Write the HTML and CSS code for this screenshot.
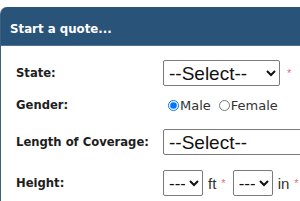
FILE: index.html
```html
<!DOCTYPE html>
<html>
<head>
<meta charset="utf-8">
<link rel="stylesheet" href="styles.css">
</head>
<body>
<div class="panel">
  <div class="panel-head">Start a quote...</div>
  <div class="panel-body">
    <div class="row row-state">
      <div class="label">State:</div>
      <div class="field">
        <select class="sel sel-state"><option>--Select--</option></select>
        <span class="req">*</span>
      </div>
    </div>
    <div class="row row-gender">
      <div class="label">Gender:</div>
      <div class="field radios">
        <label class="radio"><input type="radio" name="g" checked>Male</label>
        <label class="radio"><input type="radio" name="g">Female</label>
      </div>
    </div>
    <div class="row row-length">
      <div class="label">Length of Coverage:</div>
      <div class="field">
        <select class="sel sel-length"><option>--Select--</option></select>
      </div>
    </div>
    <div class="row row-height">
      <div class="label">Height:</div>
      <div class="field">
        <select class="sel sel-small"><option>---</option></select>
        <span class="unit">ft</span><span class="req">*</span>
        <select class="sel sel-small"><option>---</option></select>
        <span class="unit">in</span><span class="req">*</span>
      </div>
    </div>
  </div>
</div>
</body>
</html>
```
FILE: styles.css
```css
html, body {
  margin: 0;
  padding: 0;
  background: #ffffff;
  overflow: hidden;
}
body {
  padding-top: 7px;
  font-family: "DejaVu Sans", Verdana, sans-serif;
}
.panel {
  width: 340px;
  border-left: 1px solid #3f5f80;
  border-top-left-radius: 7px;
  min-height: 200px;
}
.panel-head {
  background: #2a5379;
  color: #ffffff;
  font-weight: bold;
  font-size: 11.8px;
  height: 38px;
  line-height: 44px;
  padding-left: 9px;
  border-top-left-radius: 6px;
  border-bottom: 1px solid #4e7296;
}
.panel-body {
  display: flex;
  flex-direction: column;
  padding-top: 11px;
}
.row {
  display: flex;
  align-items: center;
}
.row-state { height: 32px; }
.row-gender { height: 32px; }
.row-length { height: 42px; }
.row-height { height: 40px; }
.label {
  width: 147px;
  padding-left: 15px;
  font-weight: bold;
  font-size: 11.6px;
  color: #1e1e1e;
}
.field {
  display: flex;
  align-items: center;
}
.sel {
  font-family: "Liberation Sans", Arial, sans-serif;
  font-size: 19px;
  color: #111;
  height: 26px;
  border: 1px solid #7a7a7a;
  border-radius: 2px;
  background: #fff;
  padding: 0 1px;
  margin: 0;
}
.sel-state { width: 117px; }
.sel-length { width: 160px; }
.sel-small { width: 40px; font-size: 17px; }
.req {
  color: #e86b7a;
  font-size: 11px;
  margin-left: 7px;
  font-family: "Liberation Sans", Arial, sans-serif;
}
.unit {
  font-family: "Liberation Sans", Arial, sans-serif;
  font-size: 15px;
  color: #333;
  margin-left: 5px;
}
.row-height .req { margin-left: 5px; margin-right: 7px; }
.radios {
  padding-left: 5px;
  font-size: 13px;
  color: #333;
}
.radio {
  display: flex;
  align-items: center;
  margin-right: 8px;
}
.radio input {
  margin: 0 1px 0 0;
  width: 11px;
  height: 11px;
}
```
